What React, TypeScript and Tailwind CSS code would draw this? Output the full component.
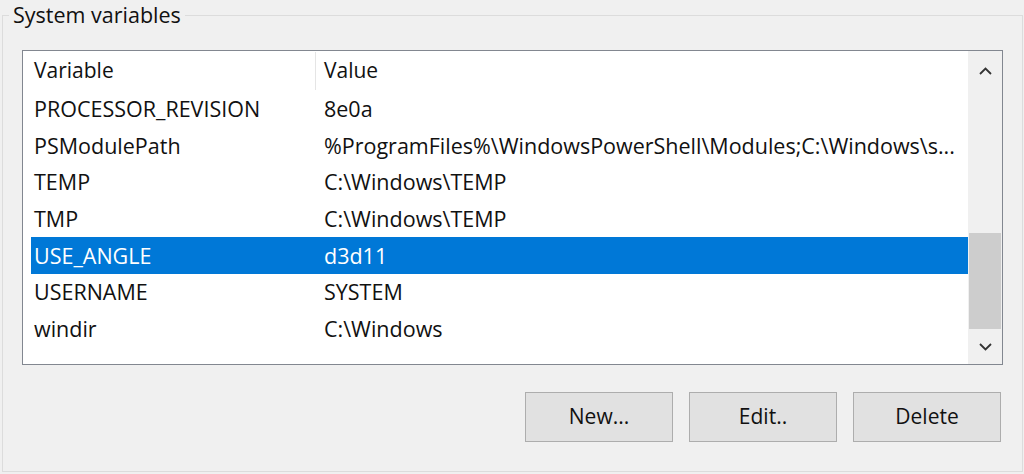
import React from 'react';

const rows = [
  { name: 'PROCESSOR_REVISION', value: '8e0a' },
  { name: 'PSModulePath', value: '%ProgramFiles%\\WindowsPowerShell\\Modules;C:\\Windows\\s...' },
  { name: 'TEMP', value: 'C:\\Windows\\TEMP' },
  { name: 'TMP', value: 'C:\\Windows\\TEMP' },
  { name: 'USE_ANGLE', value: 'd3d11', selected: true },
  { name: 'USERNAME', value: 'SYSTEM' },
  { name: 'windir', value: 'C:\\Windows' },
];

const Chevron = ({ up }: { up?: boolean }) => (
  <svg width="13" height="8" viewBox="0 0 13 8" className="block">
    <path
      d={up ? 'M1 7 L6.5 1.5 L12 7' : 'M1 1 L6.5 6.5 L12 1'}
      fill="none"
      stroke="#333"
      strokeWidth="1.8"
    />
  </svg>
);

export default function App() {
  return (
    <div className="w-[1024px] h-[474px] bg-[#f0f0f0] overflow-hidden font-['Open_Sans',sans-serif] text-[#111]">
      <fieldset className="ml-[2px] mt-[2px] w-[1019px] h-[470px] border border-[#dcdcdc] px-[19px] pt-[4px]">
        <legend className="-ml-[13px] px-[4px] text-[21.5px] leading-[26px] text-[#111]">System variables</legend>

        {/* list view */}
        <div className="mt-[18px] w-[981px] h-[315px] border border-[#828790] bg-white flex">
          <div className="flex-1 flex flex-col">
            <div className="h-[40px] flex items-center text-[21px] shrink-0">
              <div className="w-[292px] pl-[11px]">Variable</div>
              <div className="w-px h-[38px] bg-[#e5e5e5]" />
              <div className="pl-[8px]">Value</div>
            </div>
            {rows.map((r) => (
              <div
                key={r.name}
                className={`h-[36.6px] ml-[8px] flex items-center text-[21.5px] shrink-0 ${
                  r.selected ? 'bg-[#0078d7] text-white' : ''
                }`}
              >
                <div className="w-[285px] pl-[3px] whitespace-nowrap">{r.name}</div>
                <div className="pl-[8px] whitespace-nowrap">{r.value}</div>
              </div>
            ))}
          </div>

          {/* scrollbar */}
          <div className="w-[34px] bg-[#f0f0f0] flex flex-col">
            <div className="h-[40px] flex items-center justify-center shrink-0">
              <Chevron up />
            </div>
            <div className="h-[142px] shrink-0" />
            <div className="h-[96px] mx-[1px] bg-[#cdcdcd] shrink-0" />
            <div className="flex-1 flex items-center justify-center">
              <Chevron />
            </div>
          </div>
        </div>

        {/* buttons */}
        <div className="mt-[27px] flex justify-end gap-[16px] pr-[2px]">
          {['New...', 'Edit..', 'Delete'].map((b) => (
            <button
              key={b}
              className="w-[148px] h-[50px] bg-[#e1e1e1] border border-[#adadad] text-[21px] text-[#111]"
            >
              {b}
            </button>
          ))}
        </div>
      </fieldset>
    </div>
  );
}
